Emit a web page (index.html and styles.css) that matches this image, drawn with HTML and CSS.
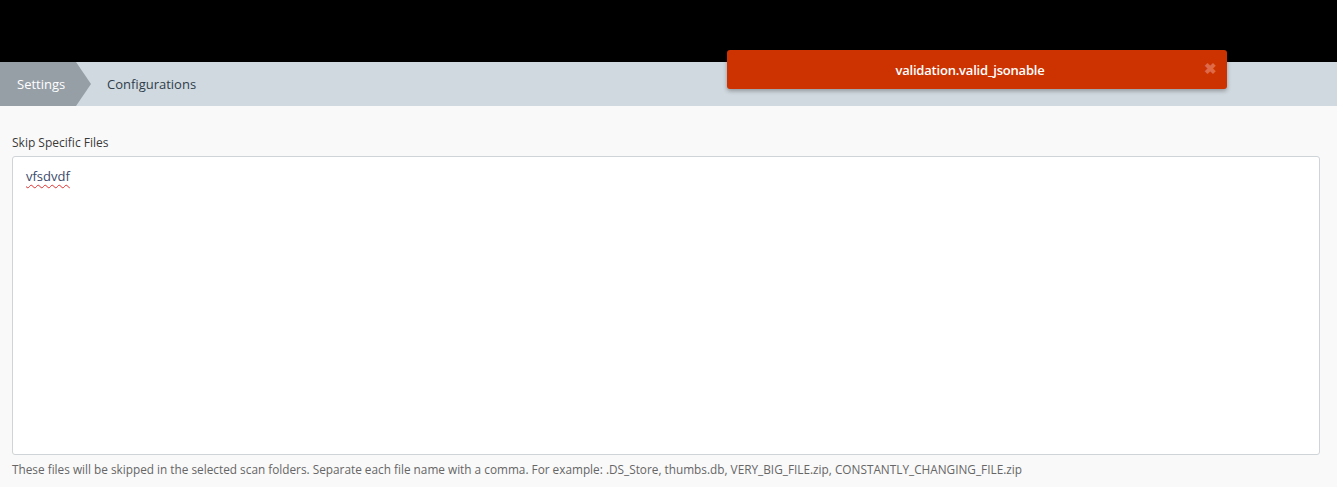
FILE: index.html
```html
<!DOCTYPE html>
<html>
<head>
<meta charset="utf-8">
<link rel="stylesheet" href="styles.css">
</head>
<body>
<div class="topbar"></div>
<nav class="crumbs">
  <div class="crumb active">Settings</div>
  <div class="crumb">Configurations</div>
</nav>
<main class="content">
  <label class="label">Skip Specific Files</label>
  <div class="textarea"><span class="typed">vfsdvdf</span></div>
  <p class="help">These files will be skipped in the selected scan folders. Separate each file name with a comma. For example: .DS_Store, thumbs.db, VERY_BIG_FILE.zip, CONSTANTLY_CHANGING_FILE.zip</p>
</main>
<div class="toast">
  <span class="toast-text">validation.valid_jsonable</span>
  <span class="toast-close">&#x2716;</span>
</div>
</body>
</html>
```
FILE: styles.css
```css
html, body {
  margin: 0;
  padding: 0;
}
body {
  font-family: "Open Sans", "Segoe UI", sans-serif;
  background: #f9f9f9;
  color: #333;
  width: 1337px;
  height: 487px;
  overflow: hidden;
  position: relative;
}
.topbar {
  height: 62px;
  background: #000;
}
.crumbs {
  height: 44px;
  background: #d0d9df;
  display: flex;
  align-items: stretch;
}
.crumb {
  display: flex;
  align-items: center;
  font-size: 13px;
  color: #2f3e4c;
  padding-left: 16px;
}
.crumb.active {
  position: relative;
  background: #969ea6;
  color: #fff;
  padding-left: 17px;
  width: 59px;
  margin-right: 15px;
}
.crumb.active::after {
  content: "";
  position: absolute;
  right: -15px;
  top: 0;
  border-top: 22px solid transparent;
  border-bottom: 22px solid transparent;
  border-left: 15px solid #969ea6;
}
.content {
  padding: 28px 17px 0 12px;
}
.label {
  display: block;
  font-size: 12px;
  color: #3a3a3a;
  margin-bottom: 5px;
  line-height: 17px;
}
.textarea {
  height: 279px;
  background: #fff;
  border: 1px solid #cfd4d8;
  border-radius: 3px;
  padding: 7px 13px 11px;
}
.typed {
  font-size: 13px;
  color: #3b4a6b;
  text-decoration: underline wavy #e03030;
  text-decoration-thickness: 1px;
  text-underline-offset: 3px;
}
.help {
  margin: 6px 0 0;
  font-size: 11.8px;
  color: #666;
  line-height: 17px;
}
.toast {
  position: absolute;
  left: 727px;
  top: 50px;
  width: 500px;
  height: 39px;
  box-sizing: border-box;
  padding-right: 14px;
  background: #cc3300;
  border-radius: 3px;
  box-shadow: 0 2px 4px rgba(0,0,0,0.3);
  display: flex;
  align-items: center;
  justify-content: center;
}
.toast-text {
  color: #fff;
  font-size: 13px;
  font-weight: 600;
  letter-spacing: -0.2px;
}
.toast-close {
  position: absolute;
  right: 10px;
  top: 10px;
  font-size: 15px;
  font-weight: bold;
  color: #df6a4a;
  line-height: 17px;
}
```
